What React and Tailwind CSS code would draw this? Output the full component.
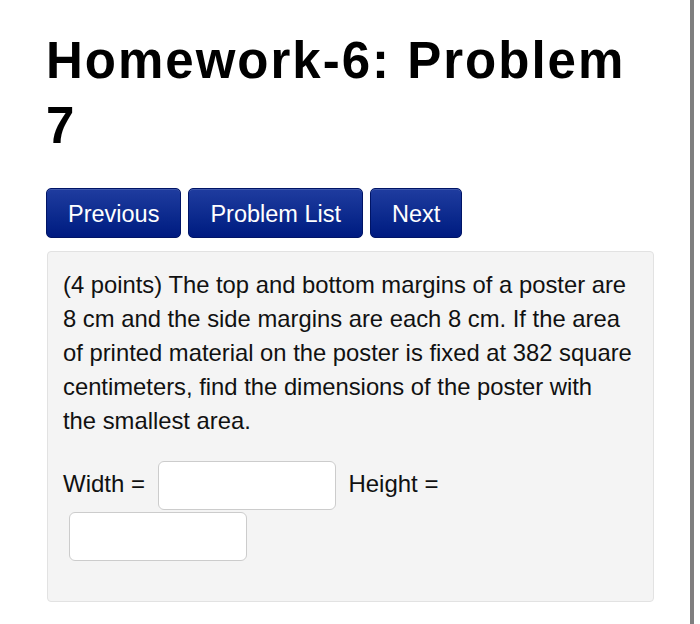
import React from "react";

const font = { fontFamily: '"Liberation Sans", Arial, Helvetica, sans-serif' };

function NavButton({ children }) {
  return (
    <button className="h-[50px] rounded-[5px] border border-[#001466] bg-gradient-to-b from-[#1f3c9f] to-[#001a80] px-[21px] pt-[3px] text-[23.5px] leading-none text-white shadow-[inset_0_1px_0_rgba(255,255,255,0.15)]">
      {children}
    </button>
  );
}

export default function App() {
  return (
    <div className="flex min-h-[624px] bg-white text-black" style={font}>
      <main className="w-[690px] pl-[46px] pr-[36px]">
        <h1 className="mt-[28px] text-[51px] font-bold leading-[65px] tracking-[2px]">Homework-6: Problem 7</h1>

        <div className="mt-[30px] flex gap-[7px]">
          <NavButton>Previous</NavButton>
          <NavButton>Problem List</NavButton>
          <NavButton>Next</NavButton>
        </div>

        <div className="mt-[13px] ml-px h-[351px] rounded-[4px] border border-[#e2e2e2] bg-[#f4f4f4] pl-[15px] pt-[16px]">
          <p className="w-[590px] text-[23.8px] leading-[34px] text-[#111]">
            (4 points) The top and bottom margins of a poster are
            <br />8 cm and the side margins are each 8 cm. If the area
            <br />
            of printed material on the poster is fixed at 382 square
            <br />
            centimeters, find the dimensions of the poster with
            <br />
            the smallest area.
          </p>
          <div className="mt-[21px] w-[560px] text-[24px] leading-[50px] text-[#111]">
            Width ={" "}
            <input
              type="text"
              className="mx-[6px] inline-block h-[49px] w-[178px] rounded-[6px] border border-[#cccccc] bg-white align-middle"
            />{" "}
            Height ={" "}
            <input
              type="text"
              className="mx-[6px] inline-block h-[49px] w-[178px] rounded-[6px] border border-[#cccccc] bg-white align-middle"
            />
          </div>
        </div>
      </main>
      <div className="w-[4px] bg-[#7f7f7f]" />
      <div className="w-[6px] bg-white" />
    </div>
  );
}
